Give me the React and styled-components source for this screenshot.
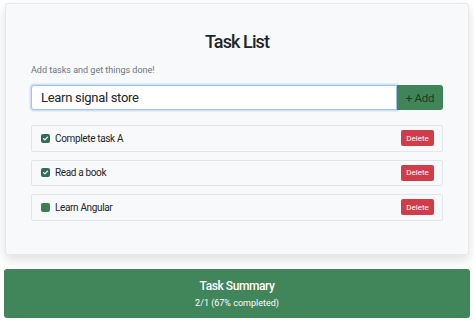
import React from "react";
import styled, { createGlobalStyle } from "styled-components";

const Global = createGlobalStyle`
  html, body { margin: 0; padding: 0; background: #ffffff; }
  body { font-family: Roboto, "Liberation Sans", sans-serif; color: #212529; }
  * { box-sizing: border-box; }
`;

const Page = styled.div`
  display: flex;
  flex-direction: column;
  gap: 14px;
  padding: 3px 4px 0 4px;
`;

const Card = styled.div`
  margin: 0 1px;
  height: 252px;
  background: #f8f9fa;
  border: 1px solid #e6e8ea;
  border-radius: 3px;
  box-shadow: 0 5px 12px rgba(0, 0, 0, 0.13);
  padding: 0 25px;
  display: flex;
  flex-direction: column;
`;

const Title = styled.h1`
  margin: 26px 0 0 0;
  font-size: 18px;
  line-height: 24px;
  font-weight: 500;
  letter-spacing: -0.05em;
  text-align: center;
  color: #212529;
`;

const Subtitle = styled.p`
  margin: 10px 0 0 0;
  font-size: 9px;
  line-height: 13px;
  color: #6c757d;
`;

const InputRow = styled.div`
  display: flex;
  margin-top: 8px;
  height: 25px;
`;

const TaskInput = styled.div`
  flex: 1;
  background: #fff;
  border: 1px solid #9ec5f0;
  border-radius: 3px 0 0 3px;
  box-shadow: 0 0 0 1.5px rgba(160, 195, 240, 0.45);
  display: flex;
  align-items: center;
  padding-left: 9px;
  font-size: 13px;
  letter-spacing: -0.023em;
  color: #212529;
`;

const AddButton = styled.div`
  width: 46px;
  background: #3f8558;
  border-radius: 0 3px 3px 0;
  display: flex;
  align-items: center;
  justify-content: center;
  font-size: 11.5px;
  letter-spacing: -0.02em;
  color: #1e3a28;
`;

const List = styled.div`
  display: flex;
  flex-direction: column;
  gap: 8px;
  margin-top: 15px;
`;

const Item = styled.div`
  height: 26.5px;
  border: 1px solid #e3e5e8;
  border-radius: 2px;
  background: #f8f9fa;
  display: flex;
  align-items: center;
  padding: 0 8px 0 9px;
`;

const Check = styled.span`
  width: 9px;
  height: 9px;
  border-radius: 2px;
  background: ${(p) => (p.$checked ? "#2f6e55" : "#3c7f55")};
  display: inline-flex;
  align-items: center;
  justify-content: center;
  margin-right: 5px;
`;

const Label = styled.span`
  flex: 1;
  font-size: 10px;
  letter-spacing: -0.035em;
  color: #212529;
`;

const DeleteButton = styled.div`
  width: 33px;
  height: 16px;
  background: #d03d48;
  border-radius: 2px;
  color: #fff;
  font-size: 8px;
  display: flex;
  align-items: center;
  justify-content: center;
`;

const Summary = styled.div`
  height: 49px;
  background: #41855a;
  border-radius: 3px;
  color: #fff;
  display: flex;
  flex-direction: column;
  align-items: center;
  justify-content: center;
  gap: 3px;
`;

const SummaryTitle = styled.div`
  font-size: 12px;
  font-weight: 500;
  line-height: 15px;
  letter-spacing: -0.035em;
`;

const SummaryText = styled.div`
  font-size: 9px;
  line-height: 12px;
`;

const tasks = [
  { name: "Complete task A", done: true },
  { name: "Read a book", done: true },
  { name: "Learn Angular", done: false },
];

export default function App() {
  return (
    <>
      <Global />
      <Page>
        <Card>
          <Title>Task List</Title>
          <Subtitle>Add tasks and get things done!</Subtitle>
          <InputRow>
            <TaskInput>Learn signal store</TaskInput>
            <AddButton>+ Add</AddButton>
          </InputRow>
          <List>
            {tasks.map((t) => (
              <Item key={t.name}>
                <Check $checked={t.done}>
                  {t.done && (
                    <svg width="7" height="7" viewBox="0 0 10 10">
                      <path d="M2.2 5.2 L4.2 7.1 L7.9 3.1" fill="none" stroke="#fff" strokeWidth="1.6" strokeLinecap="round" strokeLinejoin="round" />
                    </svg>
                  )}
                </Check>
                <Label>{t.name}</Label>
                <DeleteButton>Delete</DeleteButton>
              </Item>
            ))}
          </List>
        </Card>
        <Summary>
          <SummaryTitle>Task Summary</SummaryTitle>
          <SummaryText>2/1 (67% completed)</SummaryText>
        </Summary>
      </Page>
    </>
  );
}
